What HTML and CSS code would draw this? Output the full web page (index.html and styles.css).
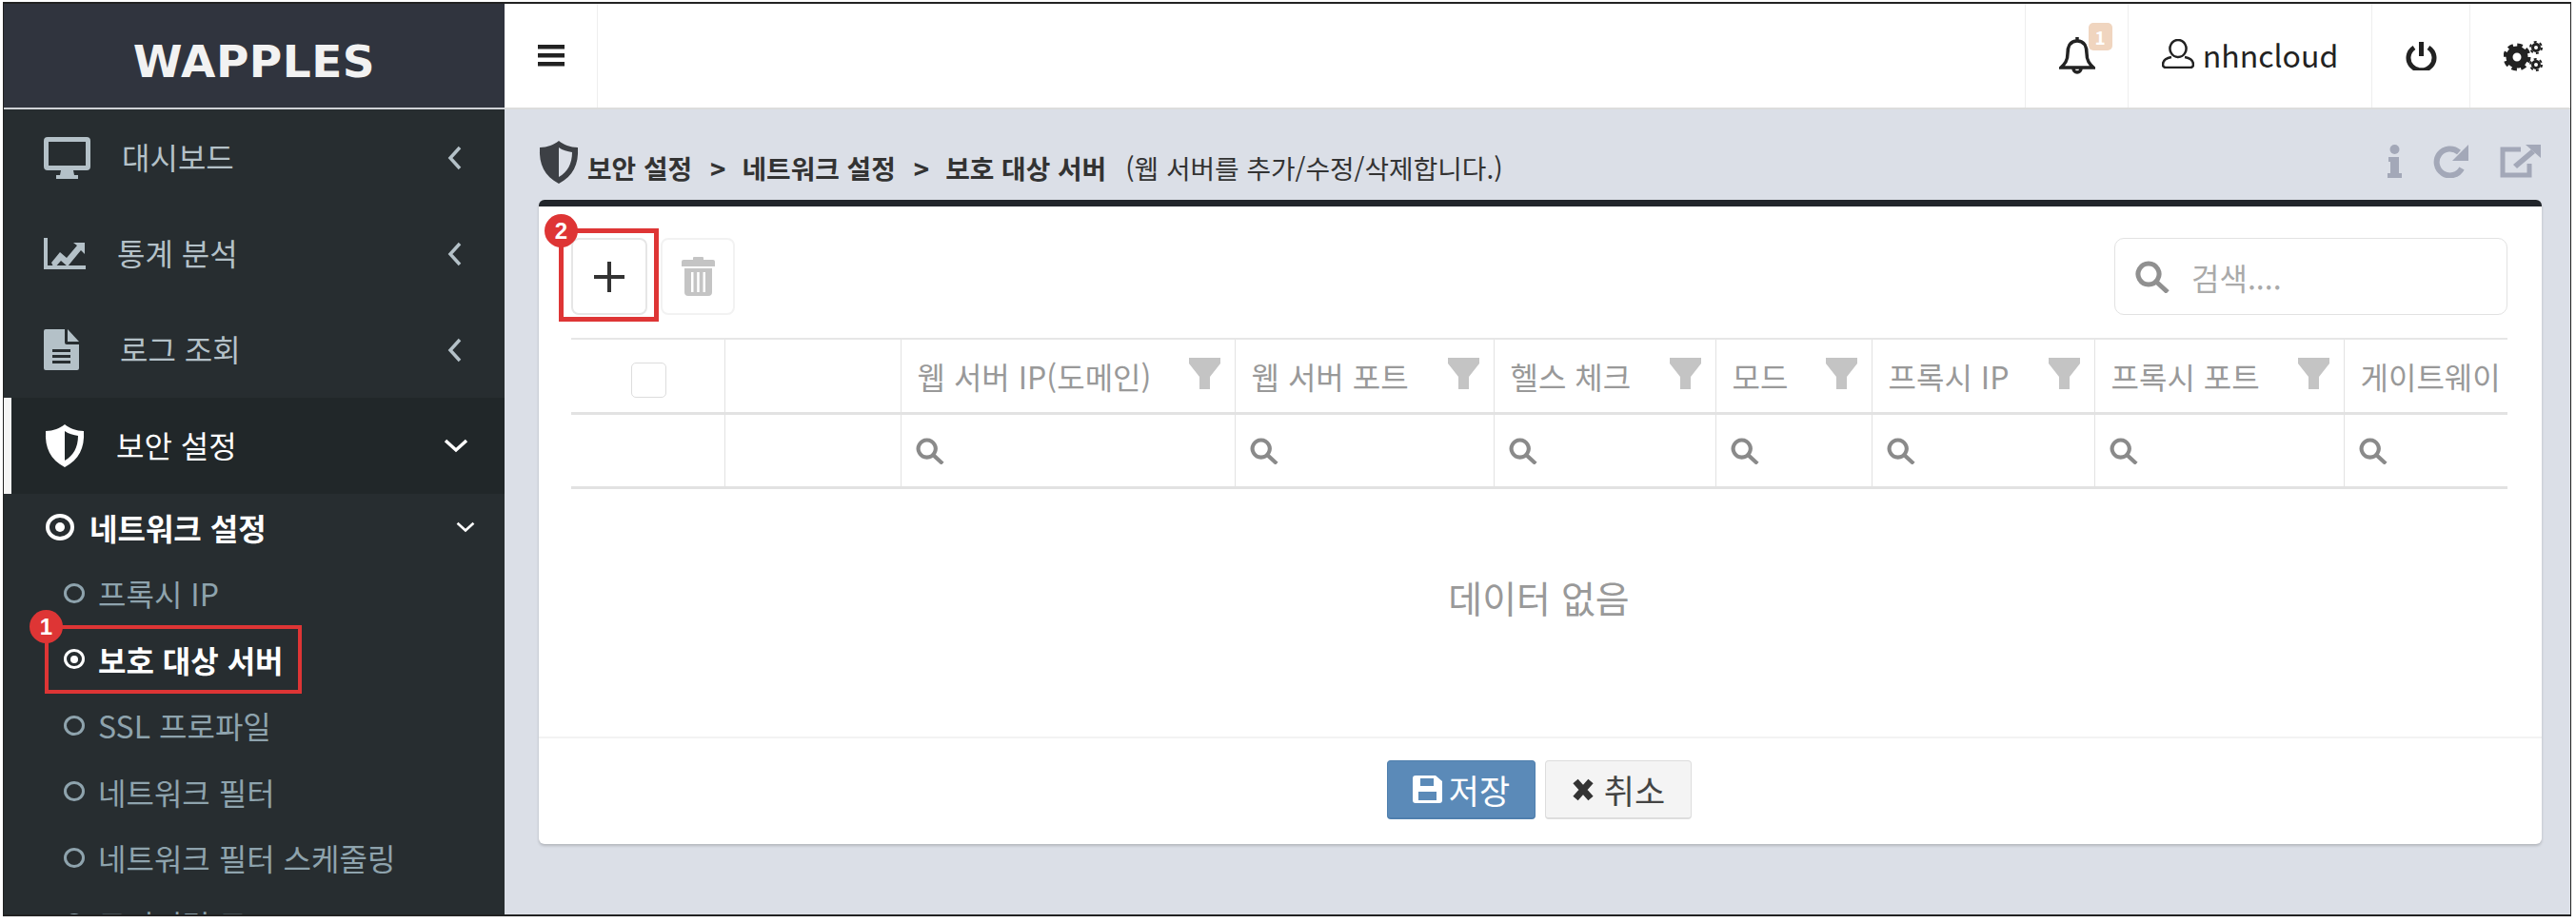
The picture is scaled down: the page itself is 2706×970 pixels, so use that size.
FILE: index.html
```html
<!DOCTYPE html>
<html lang="ko">

<head>
    <meta charset="UTF-8">
    <title>WAPPLES</title>
    <link rel="stylesheet" href="styles.css">
</head>

<body>
    <!-- shared icons -->
    <svg class="defs">
        <symbol id="i-desktop" viewBox="0 0 49 44"><path fill-rule="evenodd" d="M4 0h41a4 4 0 0 1 4 4v27a4 4 0 0 1-4 4H31l1 5h4v4H13v-4h4l1-5H4a4 4 0 0 1-4-4V4a4 4 0 0 1 4-4zM5 5v25h39V5z"/></symbol>
        <symbol id="i-chart" viewBox="0 0 44 33"><path d="M0 0h4v29h40v4H0z"/><path d="M8 26l9-11 7 6 11-13-4-3h12v12l-4-4-14 17-7-6-7 8z"/></symbol>
        <symbol id="i-file" viewBox="0 0 37 43"><path fill-rule="evenodd" d="M2 0h20v14a2 2 0 0 0 2 2h13v25a2 2 0 0 1-2 2H2a2 2 0 0 1-2-2V2a2 2 0 0 1 2-2zM9 21v3h19v-3zM9 27v3h19v-3zM9 33v3h19v-3z"/><path d="M25 0l12 13H25z"/></symbol>
        <symbol id="i-shield" viewBox="0 0 42 45"><path fill-rule="evenodd" d="M21 0c5 4 12 7 20 7 1 18-5 30-20 38C6 37 0 25 1 7c8 0 15-3 20-7zM21 7v31c9-5 14-14 14-26-5-1-10-2-14-5z"/></symbol>
        <symbol id="i-left" viewBox="0 0 15 26"><path d="M13 2L3 13l10 11" fill="none" stroke="currentColor" stroke-width="3.5"/></symbol>
        <symbol id="i-down" viewBox="0 0 26 15"><path d="M2 2l11 10L24 2" fill="none" stroke="currentColor" stroke-width="3.5"/></symbol>
        <symbol id="i-bars" viewBox="0 0 28 23"><path d="M0 0h28v4.500H0zM0 9h28v4.500H0zM0 18h28v4.500H0z"/></symbol>
        <symbol id="i-bell" viewBox="0 0 38 42"><path d="M19 5C11 5 9 12 9 18c0 8-3 11-7 15h34c-4-4-7-7-7-15 0-6-2-13-10-13zM19 1v4M15 34a4 4 0 0 0 8 0" fill="none" stroke="currentColor" stroke-width="3.500"/></symbol>
        <symbol id="i-user" viewBox="0 0 34 31"><path d="M17 1a8.500 9 0 1 1-.01 0zM10 19C4 20 1 23 1 27a3 3 0 0 0 3 3h26a3 3 0 0 0 3-3c0-4-3-7-9-8" fill="none" stroke="currentColor" stroke-width="2.500"/></symbol>
        <symbol id="i-power" viewBox="0 0 33 30"><path d="M9 6a13.500 13 0 1 0 15 0M16.500 0v15" fill="none" stroke="currentColor" stroke-width="5"/></symbol>
        <symbol id="i-gears" viewBox="0 0 41 32">
            <circle cx="14" cy="17" r="8" fill="none" stroke="currentColor" stroke-width="7"/>
            <circle cx="14" cy="17" r="12.500" fill="none" stroke="currentColor" stroke-width="4" stroke-dasharray="5.500 4.300"/>
            <circle cx="34" cy="7" r="3.500" fill="none" stroke="currentColor" stroke-width="3"/>
            <circle cx="34" cy="7" r="6" fill="none" stroke="currentColor" stroke-width="2" stroke-dasharray="3 3.300"/>
            <circle cx="34" cy="25" r="3.500" fill="none" stroke="currentColor" stroke-width="3"/>
            <circle cx="34" cy="25" r="6" fill="none" stroke="currentColor" stroke-width="2" stroke-dasharray="3 3.300"/>
        </symbol>
        <symbol id="i-info" viewBox="0 0 15 35"><circle cx="7.500" cy="5" r="5"/><path d="M1 13h11v17h3v5H0v-5h3V18H1z"/></symbol>
        <symbol id="i-refresh" viewBox="0 0 37 35"><path d="M30 25A14 14 0 1 1 27 8" fill="none" stroke="currentColor" stroke-width="6"/><path d="M37 0v17H20z"/></symbol>
        <symbol id="i-external" viewBox="0 0 43 35"><path d="M22 5H3v27h28V20" fill="none" stroke="currentColor" stroke-width="5"/><path d="M14 21L33 5l4 4-19 16z"/><path d="M27 0h16v14z"/></symbol>
        <symbol id="i-plus" viewBox="0 0 32 32"><path d="M16 0v32M0 16h32" fill="none" stroke="currentColor" stroke-width="4"/></symbol>
        <symbol id="i-trash" viewBox="0 0 35 41"><path d="M12 3V1a1 1 0 0 1 1-1h9a1 1 0 0 1 1 1v2h10a2 2 0 0 1 2 2v5H0V5a2 2 0 0 1 2-2z"/><path fill-rule="evenodd" d="M3 12h29v25a4 4 0 0 1-4 4H7a4 4 0 0 1-4-4zM10 16v21h2.500V16zM16.200 16v21h2.500V16zM22.500 16v21H25V16z"/></symbol>
        <symbol id="i-search" viewBox="0 0 36 34"><path d="M14 3a11 11 0 1 1-.01 0zM22 22l12 11" fill="none" stroke="currentColor" stroke-width="5"/></symbol>
        <symbol id="i-funnel" viewBox="0 0 33 33"><path d="M0 0h33v6L22 20v13H11V20L0 6z"/></symbol>
        <symbol id="i-save" viewBox="0 0 31 29"><path fill-rule="evenodd" d="M3 0h21l7 6v20a3 3 0 0 1-3 3H3a3 3 0 0 1-3-3V3a3 3 0 0 1 3-3zM8 3v8h14V3zM6 17v9h19v-9z"/></symbol>
        <symbol id="i-times" viewBox="0 0 24 26"><path d="M4 4l16 18M20 4L4 22" fill="none" stroke="currentColor" stroke-width="7"/></symbol>
    </svg>

    <div class="frame">
        <aside class="sidebar">
            <div class="logo">WAPPLES</div>

            <ul class="menu">
                <li class="menu-item">
                    <svg class="ic-desktop"><use href="#i-desktop"/></svg>
                    <span>대시보드</span>
                    <svg class="ic-left"><use href="#i-left"/></svg>
                </li>
                <li class="menu-item">
                    <svg class="ic-chart"><use href="#i-chart"/></svg>
                    <span>통계 분석</span>
                    <svg class="ic-left"><use href="#i-left"/></svg>
                </li>
                <li class="menu-item">
                    <svg class="ic-file"><use href="#i-file"/></svg>
                    <span>로그 조회</span>
                    <svg class="ic-left"><use href="#i-left"/></svg>
                </li>
                <li class="menu-item active">
                    <svg class="ic-shield"><use href="#i-shield"/></svg>
                    <span>보안 설정</span>
                    <svg class="ic-down"><use href="#i-down"/></svg>
                </li>
            </ul>

            <ul class="submenu">
                <li class="sub-head">
                    <span class="target"></span>
                    <span>네트워크 설정</span>
                    <svg class="ic-down-sm"><use href="#i-down"/></svg>
                </li>
                <li class="sub-item"><span class="ring"></span>프록시 IP</li>
                <li class="sub-item current">
                    <span class="ring on"></span>보호 대상 서버
                    <div class="mark mark-menu"><b class="badge">1</b></div>
                </li>
                <li class="sub-item"><span class="ring"></span>SSL 프로파일</li>
                <li class="sub-item"><span class="ring"></span>네트워크 필터</li>
                <li class="sub-item"><span class="ring"></span>네트워크 필터 스케줄링</li>
                <li class="sub-item"><span class="ring"></span>모니터링 모드</li>
            </ul>
        </aside>

        <div class="main">
            <header class="topbar">
                <div class="top-cell toggle"><svg class="ic-bars"><use href="#i-bars"/></svg></div>
                <div class="top-space"></div>
                <div class="top-cell bell">
                    <span class="bell-wrap">
                        <svg class="ic-bell"><use href="#i-bell"/></svg>
                        <b class="bell-count">1</b>
                    </span>
                </div>
                <div class="top-cell user"><svg class="ic-user"><use href="#i-user"/></svg>nhncloud</div>
                <div class="top-cell power"><svg class="ic-power"><use href="#i-power"/></svg></div>
                <div class="top-cell gears"><svg class="ic-gears"><use href="#i-gears"/></svg></div>
            </header>

            <div class="crumbs">
                <svg class="ic-crumb"><use href="#i-shield"/></svg>
                <b>보안 설정</b>
                <b class="sep">&gt;</b>
                <b>네트워크 설정</b>
                <b class="sep">&gt;</b>
                <b>보호 대상 서버</b>
                <span class="crumb-desc">(웹 서버를 추가/수정/삭제합니다.)</span>
                <div class="crumb-tools">
                    <svg class="ic-info"><use href="#i-info"/></svg>
                    <svg class="ic-refresh"><use href="#i-refresh"/></svg>
                    <svg class="ic-external"><use href="#i-external"/></svg>
                </div>
            </div>

            <section class="card">
                <div class="toolbar">
                    <button class="tool-btn">
                        <svg class="ic-plus"><use href="#i-plus"/></svg>
                        <div class="mark mark-add"><b class="badge">2</b></div>
                    </button>
                    <button class="tool-btn off"><svg class="ic-trash"><use href="#i-trash"/></svg></button>
                    <div class="search">
                        <svg class="ic-search"><use href="#i-search"/></svg>
                        <span>검색....</span>
                    </div>
                </div>

                <table class="grid">
                    <colgroup>
                        <col class="c1"><col class="c2"><col class="c3"><col class="c4"><col class="c5">
                        <col class="c6"><col class="c7"><col class="c8"><col class="c9">
                    </colgroup>
                    <thead>
                        <tr>
                            <th class="check"><span class="checkbox"></span></th>
                            <th></th>
                            <th><div class="th-in">웹 서버 IP(도메인)<svg class="ic-funnel"><use href="#i-funnel"/></svg></div></th>
                            <th><div class="th-in">웹 서버 포트<svg class="ic-funnel"><use href="#i-funnel"/></svg></div></th>
                            <th><div class="th-in">헬스 체크<svg class="ic-funnel"><use href="#i-funnel"/></svg></div></th>
                            <th><div class="th-in">모드<svg class="ic-funnel"><use href="#i-funnel"/></svg></div></th>
                            <th><div class="th-in">프록시 IP<svg class="ic-funnel"><use href="#i-funnel"/></svg></div></th>
                            <th><div class="th-in">프록시 포트<svg class="ic-funnel"><use href="#i-funnel"/></svg></div></th>
                            <th><div class="th-in">게이트웨이</div></th>
                        </tr>
                    </thead>
                    <tbody>
                        <tr>
                            <td></td>
                            <td></td>
                            <td><svg class="ic-filter"><use href="#i-search"/></svg></td>
                            <td><svg class="ic-filter"><use href="#i-search"/></svg></td>
                            <td><svg class="ic-filter"><use href="#i-search"/></svg></td>
                            <td><svg class="ic-filter"><use href="#i-search"/></svg></td>
                            <td><svg class="ic-filter"><use href="#i-search"/></svg></td>
                            <td><svg class="ic-filter"><use href="#i-search"/></svg></td>
                            <td><svg class="ic-filter"><use href="#i-search"/></svg></td>
                        </tr>
                    </tbody>
                </table>

                <div class="empty">데이터 없음</div>

                <div class="card-foot">
                    <button class="btn btn-save"><svg class="ic-save"><use href="#i-save"/></svg>저장</button>
                    <button class="btn btn-cancel"><svg class="ic-times"><use href="#i-times"/></svg>취소</button>
                </div>
            </section>
        </div>
    </div>
</body>

</html>
```

FILE: styles.css
```css
html,
body {
    margin: 0;
    height: 100%;
    overflow: hidden;
    background-color: #fff;
}

body {
    font-family: "Noto Sans CJK KR", "Noto Sans", sans-serif;
    font-size: 32px;
    color: #333;
}

ul {
    list-style: none;
    margin: 0;
    padding: 0;
}

svg {
    display: block;
    flex: none;
    fill: currentColor;
}

.defs {
    display: none;
}

.frame {
    display: flex;
    box-sizing: border-box;
    width: 2698px;
    height: 961px;
    margin: 2px 0 0 3px;
    border: 1px solid #222;
    border-width: 2px 1px;
    overflow: hidden;
    background-color: #dbdfe7;
}

/* sidebar */

.sidebar {
    flex: none;
    width: 526px;
    overflow: hidden;
    background-color: #272d30;
}

.logo {
    box-sizing: border-box;
    height: 111px;
    padding-top: 33px;
    border-bottom: 2px solid #cfd2d6;
    background-color: #30343e;
    color: #f2f2f2;
    font-family: "DejaVu Sans", sans-serif;
    font-size: 47px;
    font-weight: 700;
    line-height: 56px;
    letter-spacing: 0.500px;
    text-align: center;
}

.menu-item {
    display: flex;
    align-items: center;
    gap: 33px;
    height: 101px;
    box-sizing: border-box;
    padding: 0 45px 0 42px;
    color: #b4c1c8;
}

.menu-item span {
    flex: 1;
    margin-bottom: 3px;
}

.menu-item.active {
    border-left: 8px solid #f5f5f5;
    padding-left: 35px;
    padding-right: 38px;
    background-color: #212729;
    color: #fff;
}

.ic-desktop { width: 49px; height: 44px; }
.ic-chart { width: 44px; height: 33px; }
.ic-file { width: 37px; height: 43px; margin-right: 10px; }
.ic-shield { width: 42px; height: 45px; }
.ic-left { width: 15px; height: 26px; }
.ic-down { width: 26px; height: 15px; }
.ic-down-sm { width: 20px; height: 12px; }

.sub-head,
.sub-item {
    position: relative;
    display: flex;
    align-items: center;
    height: 69.500px;
    white-space: nowrap;
}

.sub-head {
    gap: 16px;
    padding: 0 31px 0 44px;
    color: #fff;
    font-weight: 700;
}

.sub-head span:nth-child(2) {
    flex: 1;
}

.target {
    display: flex;
    align-items: center;
    justify-content: center;
    box-sizing: border-box;
    width: 30px;
    height: 28px;
    border: 4px solid #fff;
    border-radius: 50%;
}

.target::after {
    content: "";
    width: 10px;
    height: 10px;
    border-radius: 50%;
    background-color: #fff;
}

.sub-item {
    padding-left: 63px;
    color: #8ea3ad;
}

.sub-item.current {
    color: #fff;
    font-weight: 700;
}

.ring {
    display: flex;
    align-items: center;
    justify-content: center;
    box-sizing: border-box;
    width: 22px;
    height: 21px;
    margin-right: 14px;
    border: 3px solid #8ea3ad;
    border-radius: 50%;
}

.ring.on {
    border-color: #fff;
}

.ring.on::after {
    content: "";
    width: 8px;
    height: 8px;
    border-radius: 50%;
    background-color: #fff;
}

/* red markers drawn over the screenshot */

.mark {
    position: absolute;
    box-sizing: border-box;
    border: 4px solid #de3535;
    pointer-events: none;
}

.mark-menu {
    left: 43px;
    top: -1px;
    width: 270px;
    height: 72px;
}

.mark-add {
    left: -15px;
    top: -12px;
    width: 105px;
    height: 98px;
    border-width: 5px;
}

.badge {
    position: absolute;
    left: -20px;
    top: -20px;
    width: 35px;
    height: 35px;
    border-radius: 50%;
    background-color: #de3535;
    color: #fff;
    font-family: "Liberation Sans", sans-serif;
    font-size: 24px;
    font-weight: 700;
    line-height: 35px;
    text-align: center;
}

/* top bar */

.main {
    display: flex;
    flex-direction: column;
    flex: 1;
    min-width: 0;
}

.topbar {
    display: flex;
    flex: none;
    height: 109px;
    border-bottom: 2px solid #dcdcdc;
    background-color: #fff;
}

.top-space {
    flex: 1;
}

.top-cell {
    display: flex;
    align-items: center;
    justify-content: center;
    box-sizing: border-box;
    color: #222;
}

.toggle { width: 98px; border-right: 1px solid #eee; }
.bell { width: 108px; border-left: 1px solid #eee; }
.user { width: 256px; border-left: 1px solid #eee; gap: 9px; padding-bottom: 4px; }
.power { width: 103px; border-left: 1px solid #eee; }
.gears { width: 106px; border-left: 1px solid #eee; padding-left: 5px; }

.bell-wrap {
    position: relative;
}

.bell-count {
    position: absolute;
    left: 31px;
    top: -14px;
    width: 25px;
    height: 29px;
    border-radius: 5px;
    background-color: #f0d5bf;
    color: #fff;
    font-size: 19px;
    line-height: 29px;
    text-align: center;
}

.ic-bars { width: 28px; height: 23px; }
.ic-bell { width: 38px; height: 42px; }
.ic-user { width: 34px; height: 31px; }
.ic-power { width: 33px; height: 30px; }
.ic-gears { width: 41px; height: 32px; }

/* breadcrumb */

.crumbs {
    display: flex;
    align-items: center;
    flex: none;
    box-sizing: border-box;
    height: 95px;
    padding: 26px 31px 0 36px;
    font-size: 27.800px;
    color: #333;
}

.crumbs b {
    white-space: pre;
}

.crumbs .sep {
    margin: 0 17px 0 19px;
}

.ic-crumb {
    width: 42px;
    height: 45px;
    margin: 0 9px 10px 0;
    color: #3d4045;
}

.crumb-desc {
    margin-left: 20px;
}

.crumb-tools {
    display: flex;
    align-items: center;
    gap: 33px;
    margin-left: auto;
    margin-bottom: 12px;
    color: #a3a8b8;
}

.ic-info { width: 15px; height: 35px; }
.ic-refresh { width: 37px; height: 35px; }
.ic-external { width: 43px; height: 35px; }

/* card */

.card {
    box-sizing: border-box;
    height: 677px;
    margin: 0 30px 0 36px;
    border-top: 7px solid #22262b;
    border-radius: 6px;
    background-color: #fff;
    box-shadow: 0 2px 3px rgba(0, 0, 0, 0.18);
}

.toolbar {
    display: flex;
    padding: 33px 36px 24px 34px;
}

.tool-btn {
    position: relative;
    box-sizing: border-box;
    width: 80px;
    height: 81px;
    margin-right: 14px;
    padding: 0;
    display: flex;
    align-items: center;
    justify-content: center;
    border: 2px solid #e6e6e6;
    border-radius: 8px;
    background-color: #fff;
    color: #333;
}

.tool-btn.off {
    width: 78px;
    border-color: #f2f2f2;
    color: #c4c4c4;
}

.ic-plus { width: 32px; height: 32px; }
.ic-trash { width: 35px; height: 41px; }

.search {
    display: flex;
    align-items: center;
    gap: 23px;
    box-sizing: border-box;
    width: 413px;
    height: 81px;
    margin-left: auto;
    padding-left: 21px;
    border: 1px solid #e2e2e2;
    border-radius: 10px;
    color: #aaa;
}

.ic-search {
    width: 36px;
    height: 34px;
    color: #909090;
}

/* table */

.grid {
    width: 2034px;
    margin-left: 34px;
    border-collapse: collapse;
    table-layout: fixed;
    border-top: 2px solid #e6e6e6;
}

.c1 { width: 161px; }
.c2 { width: 185px; }
.c3 { width: 351px; }
.c4 { width: 272px; }
.c5 { width: 233px; }
.c6 { width: 164px; }
.c7 { width: 234px; }
.c8 { width: 262px; }
.c9 { width: 172px; }

.grid th,
.grid td {
    height: 76px;
    padding: 0 15px 0 17px;
    border-left: 1px solid #e2e2e2;
    border-bottom: 3px solid #e2e2e2;
    text-align: left;
    font-weight: 400;
    color: #999;
    white-space: nowrap;
    overflow: hidden;
}

.grid td {
    height: 75px;
    padding-left: 15px;
}

.grid th:first-child,
.grid td:first-child {
    border-left: 0;
}

.grid th:last-child {
    padding-right: 0;
}

.th-in {
    display: flex;
    align-items: center;
    justify-content: space-between;
}

.grid .check {
    text-align: center;
}

.checkbox {
    display: inline-block;
    box-sizing: border-box;
    width: 37px;
    height: 37px;
    vertical-align: middle;
    border: 1px solid #ddd;
    border-radius: 5px;
}

.ic-funnel {
    width: 33px;
    height: 33px;
    margin-bottom: 6px;
    color: #c4c4c4;
}

.ic-filter {
    width: 30px;
    height: 28px;
    color: #8a8a8a;
}

.empty {
    display: flex;
    align-items: center;
    justify-content: center;
    box-sizing: border-box;
    height: 260px;
    padding: 0 3px 34px 0;
    font-size: 39px;
    color: #999;
}

/* footer buttons */

.card-foot {
    display: flex;
    justify-content: center;
    gap: 10px;
    box-sizing: border-box;
    height: 110px;
    padding: 23px 2px 0 0;
    border-top: 2px solid #f3f3f3;
}

.btn {
    display: flex;
    align-items: center;
    justify-content: center;
    gap: 7px;
    box-sizing: border-box;
    height: 62px;
    padding: 0;
    font-family: inherit;
    font-size: 35px;
    border-radius: 4px;
}

.btn-save {
    width: 156px;
    border: 1px solid #4f7fae;
    border-bottom-width: 2px;
    background-color: #5b8ab8;
    color: #fff;
}

.btn-cancel {
    width: 154px;
    gap: 10px;
    border: 1px solid #ddd;
    border-bottom-width: 2px;
    background-color: #f4f4f4;
    color: #444;
}

.ic-save { width: 31px; height: 29px; }
.ic-times { width: 24px; height: 26px; color: #333; }
```
